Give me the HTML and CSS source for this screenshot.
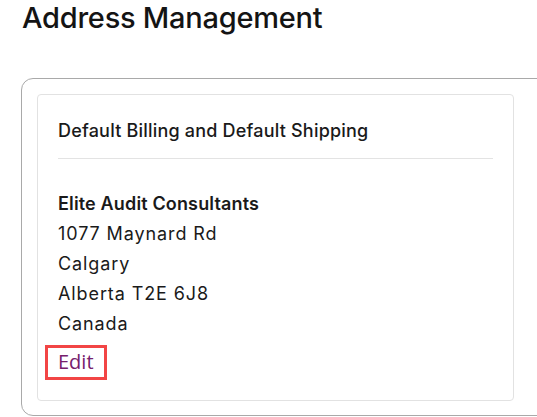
FILE: index.html
```html
<!DOCTYPE html>
<html>
<head>
<meta charset="utf-8">
<link rel="stylesheet" href="styles.css">
</head>
<body>
<h1 class="page-title">Address Management</h1>
<div class="outer">
  <div class="card">
    <h2 class="card-title">Default Billing and Default Shipping</h2>
    <div class="address">
      <div class="name">Elite Audit Consultants</div>
      <div class="line">1077 Maynard Rd</div>
      <div class="line">Calgary</div>
      <div class="line">Alberta T2E 6J8</div>
      <div class="line">Canada</div>
    </div>
    <div class="actions"><span class="highlight"><a class="edit" href="#">Edit</a></span></div>
  </div>
</div>
</body>
</html>
```
FILE: styles.css
```css
html, body {
  margin: 0;
  padding: 0;
  background: #fff;
  overflow: hidden;
}
body {
  font-family: Inter, "Liberation Sans", sans-serif;
  color: #1a1a1a;
  width: 537px;
  height: 417px;
}
.page-title {
  margin: 0;
  padding: 0 0 0 22px;
  font-size: 29px;
  font-weight: 500;
  letter-spacing: -0.25px;
  line-height: 36px;
  color: #141414;
}
.outer {
  margin: 42px 0 0 21px;
  width: 560px;
  border: 1px solid #a9a9a9;
  border-radius: 12px;
  padding: 15px 0 14px 15px;
}
.card {
  width: 435px;
  border: 1px solid #e2e2e2;
  border-radius: 4px;
  padding: 16px 20px 20px 20px;
}
.card-title {
  margin: 0;
  font-size: 18px;
  font-weight: 500;
  letter-spacing: 0.2px;
  line-height: 40px;
  padding-bottom: 7px;
  border-bottom: 1px solid #e3e3e3;
  white-space: nowrap;
}
.address {
  padding-top: 30px;
  font-size: 18px;
  letter-spacing: 0.9px;
  line-height: 30px;
}
.name {
  font-weight: 600;
  letter-spacing: 0.15px;
}
.actions {
  margin-top: 6px;
}
.highlight {
  display: inline-block;
  border: 3px solid #f24545;
  margin-left: -13px;
  padding: 0 10px;
  line-height: 28px;
}
.edit {
  font-family: "Open Sans", "Noto Sans", sans-serif;
  font-size: 20px;
  color: #76206c;
  text-decoration: none;
}
```
